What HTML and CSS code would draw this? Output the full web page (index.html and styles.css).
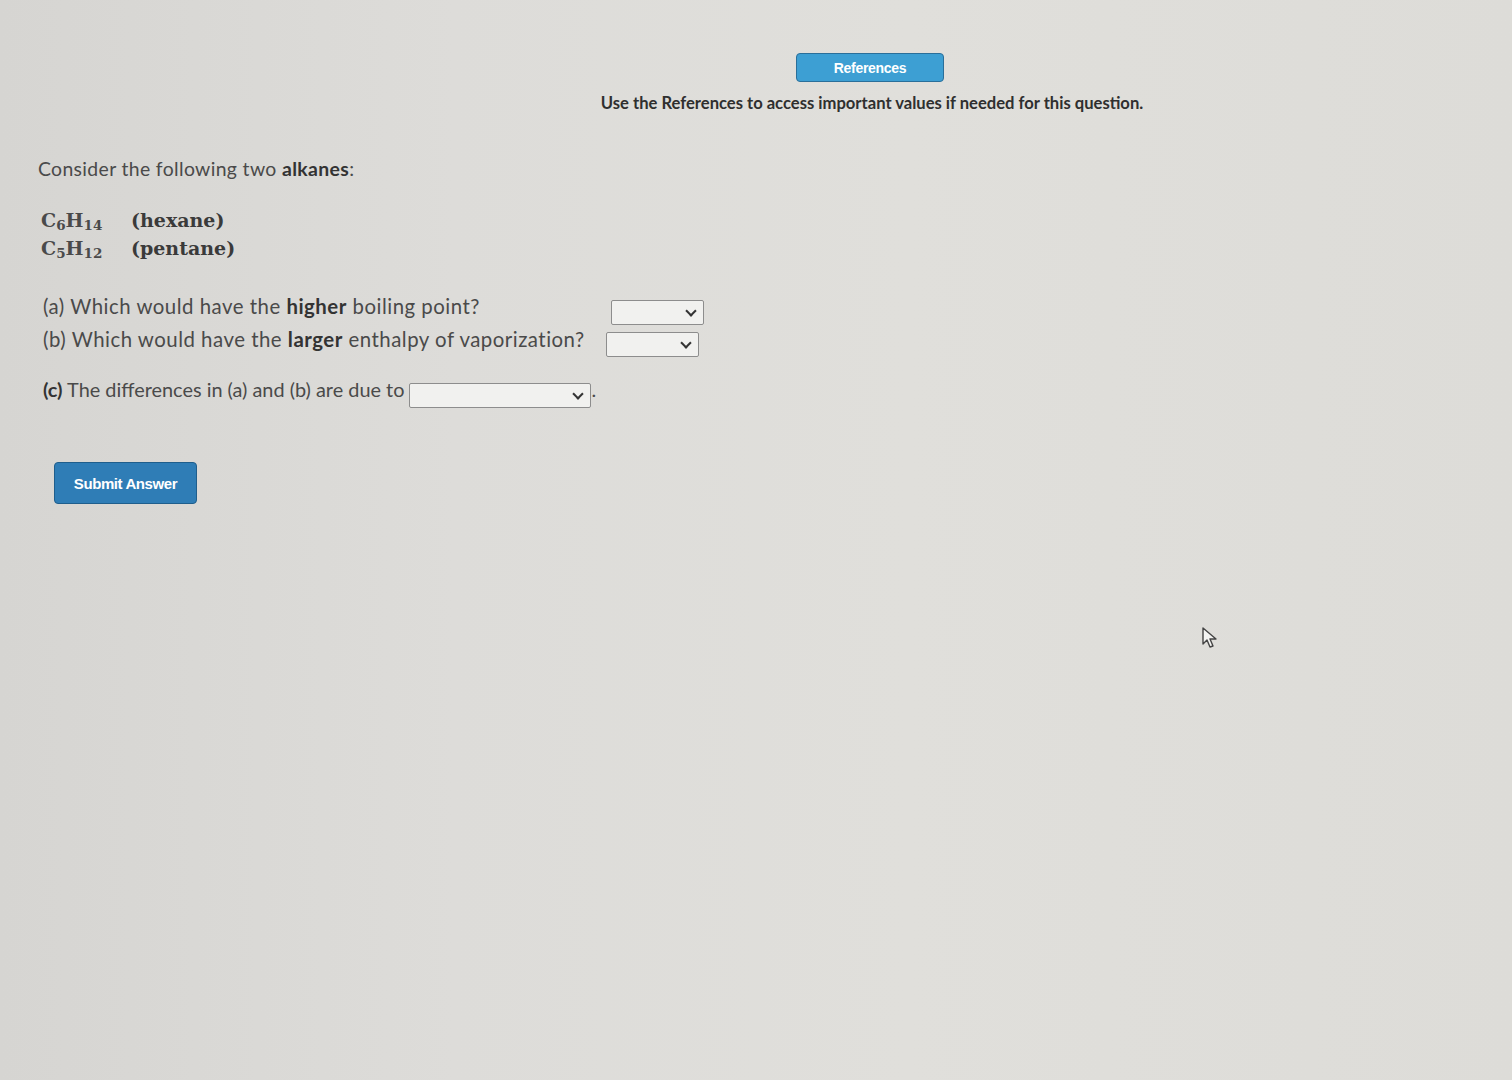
FILE: index.html
```html
<!DOCTYPE html>
<html>
<head>
<meta charset="utf-8">
<link rel="stylesheet" href="styles.css">
</head>
<body>
<div class="page">
  <div class="refs">
    <button class="ref-btn">References</button>
    <p class="ref-note">Use the References to access important values if needed for this question.</p>
  </div>
  <div class="question">
    <p class="intro">Consider the following two <b>alkanes</b>:</p>
    <div class="formulas">
      <div class="frow"><span class="f">C<sub>6</sub>H<sub>14</sub></span><span class="name">(hexane)</span></div>
      <div class="frow"><span class="f">C<sub>5</sub>H<sub>12</sub></span><span class="name">(pentane)</span></div>
    </div>
    <div class="parts">
      <div class="qrow qa"><span>(a) Which would have the <b>higher</b> boiling point?</span><span class="sel sel-a"></span></div>
      <div class="qrow qb"><span>(b) Which would have the <b>larger</b> enthalpy of vaporization?</span><span class="sel sel-b"></span></div>
    </div>
    <div class="qrow qc"><span><b>(c)</b> The differences in (a) and (b) are due to</span><span class="sel sel-c"></span><span>.</span></div>
    <button class="submit">Submit Answer</button>
  </div>
</div>
<svg class="cursor" width="20" height="26" viewBox="0 0 20 26"><path d="M2 2 L2 18 L6 14 L9 21 L12 20 L9 13 L15 13 Z" fill="#f4f4f2" stroke="#444" stroke-width="1.4" stroke-linejoin="round"/></svg>
</body>
</html>
```
FILE: styles.css
```css
html, body {
  margin: 0;
  padding: 0;
  width: 1512px;
  height: 1080px;
  overflow: hidden;
}
body {
  background: linear-gradient(90deg, #d6d5d2 0%, #dddcd9 30%, #e0dfdb 60%, #dddcd8 100%);
  font-family: Lato, sans-serif;
  color: #4a4a4a;
  position: relative;
}
.page {
  padding-top: 53px;
}
.refs {
  margin-left: 596px;
  width: 552px;
  display: flex;
  flex-direction: column;
  align-items: center;
}
.ref-btn {
  width: 148px;
  height: 29px;
  background: #3d9fd3;
  border: 1px solid #2a6f9a;
  border-radius: 4px;
  color: #fff;
  font-family: "Liberation Sans", Arial, sans-serif;
  font-weight: bold;
  font-size: 14px;
  letter-spacing: -0.3px;
  padding: 0;
  margin-left: -4px;
}
.ref-note {
  margin: 11px 0 0;
  font-family: Lato, sans-serif;
  font-weight: bold;
  font-size: 16.6px;
  color: #2f2f2f;
}
.question {
  margin-left: 38px;
  margin-top: 44px;
}
.intro {
  margin: 0;
  font-size: 19.4px;
  letter-spacing: 0.35px;
}
.intro b { color: #333; }
.formulas {
  margin-top: 26px;
  margin-left: 3px;
  font-family: "DejaVu Serif", serif;
  font-weight: bold;
  font-size: 19px;
  color: #4a4a4a;
  line-height: 28px;
}
.frow {
  display: flex;
}
.f {
  width: 90px;
}
.f sub {
  font-size: 13.5px;
  vertical-align: -3px;
  line-height: 0;
}
.name { color: #3a3a3a; }
.parts {
  margin-top: 32px;
  margin-left: 5px;
  display: flex;
  flex-direction: column;
  gap: 9px;
}
.qrow {
  display: flex;
  align-items: flex-start;
  height: 24px;
  line-height: 24px;
  font-family: Lato, sans-serif;
  font-size: 20.4px;
  letter-spacing: 0.5px;
}
.qrow b { color: #333; }
.sel {
  display: inline-block;
  box-sizing: border-box;
  width: 93px;
  height: 25px;
  background: #f1f1ef;
  border: 1.5px solid #8d8d8d;
  border-radius: 2px;
  position: relative;
  flex-shrink: 0;
}
.sel::after {
  content: "";
  position: absolute;
  right: 8px;
  top: 6px;
  width: 6px;
  height: 6px;
  border-right: 2px solid #333;
  border-bottom: 2px solid #333;
  transform: rotate(45deg);
}
.qa .sel { margin-left: 131px; margin-top: 6px; }
.qb .sel { margin-left: 21px; margin-top: 5px; }
.qc {
  margin-top: 26px;
  margin-left: 5px;
  font-size: 19.9px;
  letter-spacing: 0;
}
.qc .sel-c {
  width: 182px;
  margin-left: 5px;
  margin-top: 6px;
}
.qc .dot { line-height: 48px; }
.submit {
  margin-top: 61px;
  margin-left: 16px;
  width: 143px;
  height: 42px;
  background: #2f7db6;
  border: 1px solid #1f5e8c;
  border-radius: 4px;
  color: #fff;
  font-family: "Liberation Sans", Arial, sans-serif;
  font-weight: bold;
  font-size: 15px;
  letter-spacing: -0.4px;
  padding: 0;
}
.cursor {
  position: absolute;
  left: 1201px;
  top: 626px;
}
```
